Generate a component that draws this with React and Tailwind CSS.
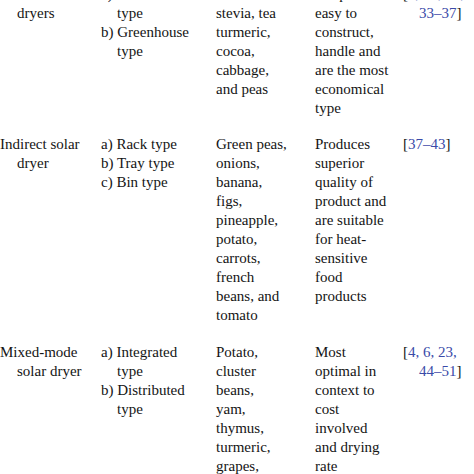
import React from 'react';

const rows = [
  {
    name: ['Direct solar', 'dryers'],
    types: [['a) Cabinet', 'type'], ['b) Greenhouse', 'type']],
    crops: ['Tomatoes', 'stevia, tea', 'turmeric,', 'cocoa,', 'cabbage,', 'and peas'],
    merit: ['Simple and', 'easy to', 'construct,', 'handle and', 'are the most', 'economical', 'type'],
    refs: ['[2, 18, 30,', '33–37]'],
  },
  {
    name: ['Indirect solar', 'dryer'],
    types: [['a) Rack type'], ['b) Tray type'], ['c) Bin type']],
    crops: ['Green peas,', 'onions,', 'banana,', 'figs,', 'pineapple,', 'potato,', 'carrots,', 'french', 'beans, and', 'tomato'],
    merit: ['Produces', 'superior', 'quality of', 'product and', 'are suitable', 'for heat-', 'sensitive', 'food', 'products'],
    refs: ['[37–43]'],
  },
  {
    name: ['Mixed-mode', 'solar dryer'],
    types: [['a) Integrated', 'type'], ['b) Distributed', 'type']],
    crops: ['Potato,', 'cluster', 'beans,', 'yam,', 'thymus,', 'turmeric,', 'grapes,', 'and okra'],
    merit: ['Most', 'optimal in', 'context to', 'cost', 'involved', 'and drying', 'rate'],
    refs: ['[4, 6, 23,', '44–51]'],
  },
];

const Hanging = ({lines, indent = 'pl-[17px]'}) => (
  <div>
    {lines.map((l, i) => (
      <div key={i} className={i > 0 ? indent : ''}>{l}</div>
    ))}
  </div>
);

// split a ref line into black brackets and blue numbers
const Ref = ({text}) => {
  const open = text.startsWith('[');
  const close = text.endsWith(']');
  const body = text.slice(open ? 1 : 0, close ? -1 : undefined);
  return (
    <>
      {open && <span className="text-[#141414]">[</span>}
      {body}
      {close && <span className="text-[#141414]">]</span>}
    </>
  );
};

export default function App() {
  return (
    <div className="w-[474px] h-[474px] overflow-hidden bg-white text-[#141414] text-[15px] leading-[19px] whitespace-nowrap"
      style={{fontFamily: '"Liberation Serif", "Times New Roman", serif'}}>
      <div className="-mt-[15.5px] flex flex-col gap-[17.5px]">
        {rows.map((r, i) => (
          <div key={i} className="flex">
            <div className="w-[101px] shrink-0">
              <Hanging lines={r.name} />
            </div>
            <div className="w-[115px] shrink-0">
              {r.types.map((t, j) => (
                <Hanging key={j} lines={t} indent="pl-[16px]" />
              ))}
            </div>
            <div className="w-[99px] shrink-0">
              {r.crops.map((c, j) => <div key={j}>{c}</div>)}
            </div>
            <div className="w-[88px] shrink-0">
              {r.merit.map((c, j) => <div key={j}>{c}</div>)}
            </div>
            <div className="flex-1 text-[#3a4aa8]">
              {r.refs.map((c, j) => (
                <div key={j} className={j > 0 ? 'pl-[16px]' : ''}>
                  <Ref text={c} />
                </div>
              ))}
            </div>
          </div>
        ))}
      </div>
    </div>
  );
}
